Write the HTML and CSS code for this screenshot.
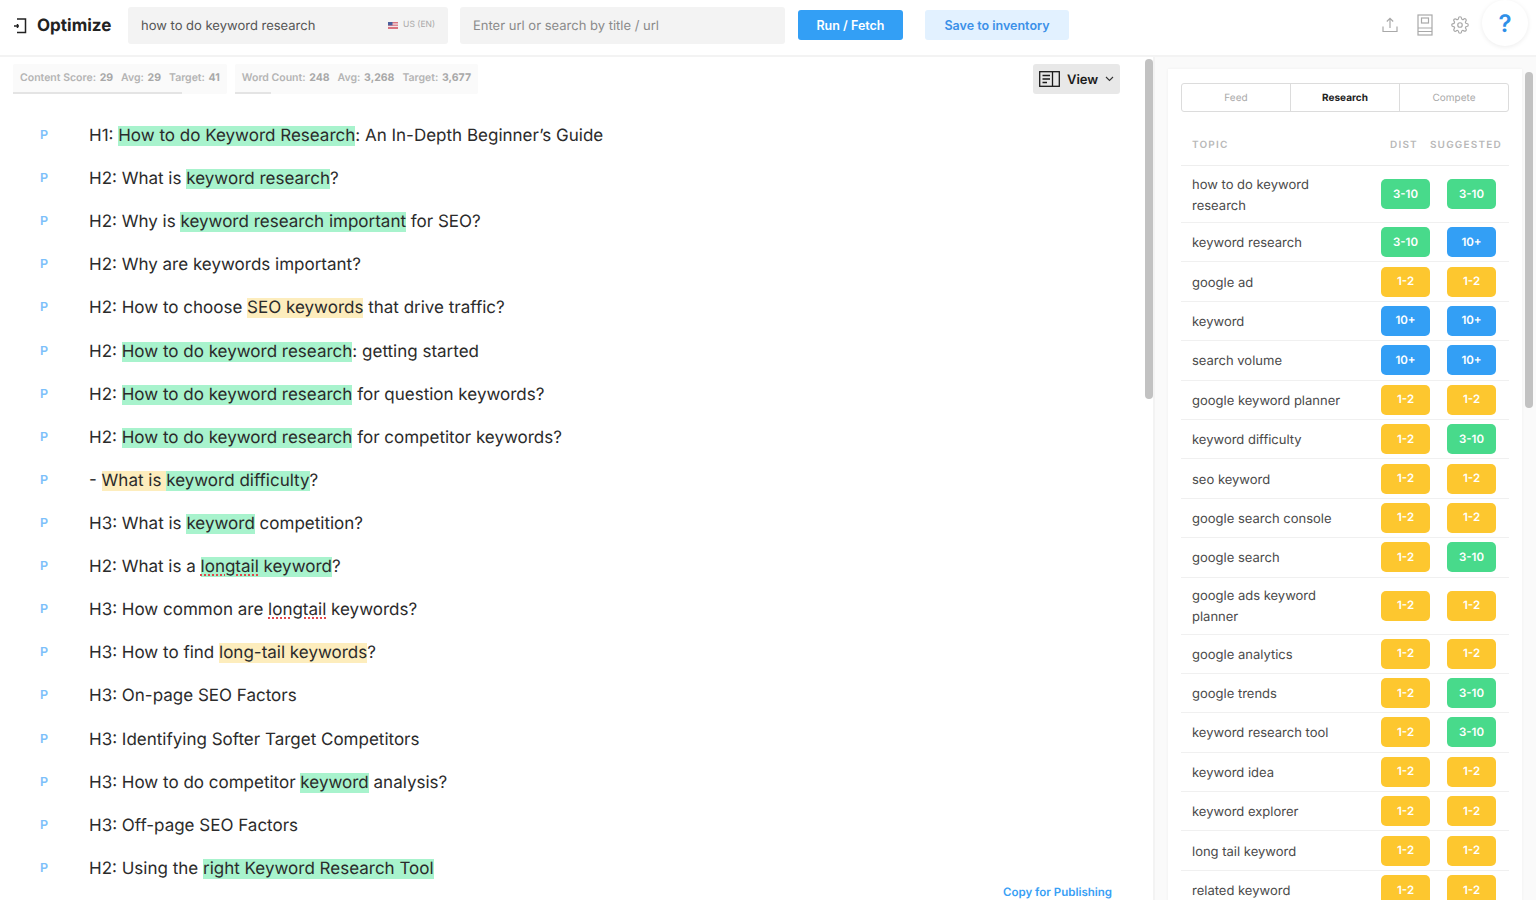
FILE: index.html
```html
<!DOCTYPE html>
<html lang="en">
<head>
  <meta charset="UTF-8" />
  <title>Optimize</title>
  <link rel="stylesheet" href="styles.css">
</head>
<body>
  <header class="topbar">
    <div class="brand">
      <svg class="brand-icon" width="14" height="16" viewBox="0 0 14 16" fill="none" stroke="#222" stroke-width="1.5">
        <path d="M4 1h8.500v13.500H4" />
        <path d="M1 8h5M4.500 6v4" />
      </svg>
      <span>Optimize</span>
    </div>
    <div class="field field-keyword">
      <span>how to do keyword research</span>
      <span class="locale">
        <svg width="10" height="7" viewBox="0 0 10 7"><rect width="10" height="7" fill="#d9737f" /><rect y="1.400" width="10" height="1.200" fill="#f3e6e8" /><rect y="3.800" width="10" height="1.200" fill="#f3e6e8" /><rect width="4.500" height="3.400" fill="#4a5f9c" /></svg>
        US (EN)
      </span>
    </div>
    <div class="field field-url">Enter url or search by title / url</div>
    <button class="btn btn-run">Run / Fetch</button>
    <button class="btn btn-save">Save to inventory</button>
    <div class="top-icons">
      <svg class="upload-icon" width="16" height="16" viewBox="0 0 16 16" fill="none" stroke="#a9a9a9" stroke-width="1.200">
        <path d="M8 11V1.500M4.800 4.500 8 1.300l3.200 3.200" />
        <path d="M1 9.500v5h14v-5" />
      </svg>
      <svg width="16" height="22" viewBox="0 0 16 22" fill="none" stroke="#a9a9a9" stroke-width="1.200">
        <rect x="1" y="1" width="14" height="20" />
        <rect x="4.500" y="4" width="7" height="5" />
        <path d="M1 14h14M1 17.500h14" />
      </svg>
      <svg width="18" height="18" viewBox="0 0 24 24" fill="none" stroke="#a9a9a9" stroke-width="1.600">
        <circle cx="12" cy="12" r="3" />
        <path d="M19.400 15a1.650 1.650 0 0 0 .33 1.820l.06.06a2 2 0 0 1 0 2.830 2 2 0 0 1-2.830 0l-.06-.06a1.650 1.650 0 0 0-1.820-.33 1.650 1.650 0 0 0-1 1.510V21a2 2 0 0 1-2 2 2 2 0 0 1-2-2v-.09A1.650 1.650 0 0 0 9 19.400a1.650 1.650 0 0 0-1.820.33l-.06.06a2 2 0 0 1-2.830 0 2 2 0 0 1 0-2.830l.06-.06a1.650 1.650 0 0 0 .33-1.820 1.650 1.650 0 0 0-1.510-1H3a2 2 0 0 1-2-2 2 2 0 0 1 2-2h.09A1.650 1.650 0 0 0 4.600 9a1.650 1.650 0 0 0-.33-1.820l-.06-.06a2 2 0 0 1 0-2.830 2 2 0 0 1 2.830 0l.06.06a1.650 1.650 0 0 0 1.820.33H9a1.650 1.650 0 0 0 1-1.510V3a2 2 0 0 1 2-2 2 2 0 0 1 2 2v.09a1.650 1.650 0 0 0 1 1.510 1.650 1.650 0 0 0 1.820-.33l.06-.06a2 2 0 0 1 2.830 0 2 2 0 0 1 0 2.830l-.06.06a1.650 1.650 0 0 0-.33 1.820V9a1.650 1.650 0 0 0 1.510 1H21a2 2 0 0 1 2 2 2 2 0 0 1-2 2h-.09a1.650 1.650 0 0 0-1.510 1z" />
      </svg>
    </div>
    <div class="help">?</div>
  </header>

  <main class="workspace">
    <section class="editor">
      <div class="editor-head">
        <div class="stat">
          <span>Content Score: <b>29</b></span><span>Avg: <b>29</b></span><span>Target: <b>41</b></span>
          <i class="stat-bar stat-bar-score"></i>
        </div>
        <div class="stat">
          <span>Word Count: <b>248</b></span><span>Avg: <b>3,268</b></span><span>Target: <b>3,677</b></span>
          <i class="stat-bar stat-bar-words"></i>
        </div>
        <div class="view-btn">
          <svg width="21" height="16" viewBox="0 0 21 16" fill="none" stroke="#1a1a1a" stroke-width="1.300">
            <rect x="0.700" y="0.700" width="19.600" height="14.600" />
            <path d="M13.500 1v14M3.500 4.500h7.500M3.500 8h7.500M3.500 11.500h4.500" />
          </svg>
          <span class="view-label">View</span>
          <svg width="9" height="6" viewBox="0 0 9 6" fill="none" stroke="#333" stroke-width="1.100"><path d="M1 1l3.500 3.500L8 1" /></svg>
        </div>
      </div>

      <div class="lines">
        <div class="line"><span class="tag">P</span><p>H1: <mark class="good">How to do Keyword Research</mark>: An In-Depth Beginner’s Guide</p></div>
        <div class="line"><span class="tag">P</span><p>H2: What is <mark class="good">keyword research</mark>?</p></div>
        <div class="line"><span class="tag">P</span><p>H2: Why is <mark class="good">keyword research important</mark> for SEO?</p></div>
        <div class="line"><span class="tag">P</span><p>H2: Why are keywords important?</p></div>
        <div class="line"><span class="tag">P</span><p>H2: How to choose <mark class="warn">SEO keywords</mark> that drive traffic?</p></div>
        <div class="line"><span class="tag">P</span><p>H2: <mark class="good">How to do keyword research</mark>: getting started</p></div>
        <div class="line"><span class="tag">P</span><p>H2: <mark class="good">How to do keyword research</mark> for question keywords?</p></div>
        <div class="line"><span class="tag">P</span><p>H2: <mark class="good">How to do keyword research</mark> for competitor keywords?</p></div>
        <div class="line"><span class="tag">P</span><p>- <mark class="warn">What is </mark><mark class="good">keyword difficulty</mark>?</p></div>
        <div class="line"><span class="tag">P</span><p>H3: What is <mark class="good">keyword</mark> competition?</p></div>
        <div class="line"><span class="tag">P</span><p>H2: What is a <mark class="good"><u>longtail</u> keyword</mark>?</p></div>
        <div class="line"><span class="tag">P</span><p>H3: How common are <u>longtail</u> keywords?</p></div>
        <div class="line"><span class="tag">P</span><p>H3: How to find <mark class="warn">long-tail keywords</mark>?</p></div>
        <div class="line"><span class="tag">P</span><p>H3: On-page SEO Factors</p></div>
        <div class="line"><span class="tag">P</span><p>H3: Identifying Softer Target Competitors</p></div>
        <div class="line"><span class="tag">P</span><p>H3: How to do competitor <mark class="good">keyword</mark> analysis?</p></div>
        <div class="line"><span class="tag">P</span><p>H3: Off-page SEO Factors</p></div>
        <div class="line"><span class="tag">P</span><p>H2: Using the <mark class="good">right Keyword Research Tool</mark></p></div>
      </div>
      <a class="copy-link">Copy for Publishing</a>
      <div class="scroll-thumb scroll-left"></div>
    </section>

    <aside class="side">
      <div class="card">
        <div class="tabs">
          <div class="tab">Feed</div>
          <div class="tab tab-active">Research</div>
          <div class="tab">Compete</div>
        </div>
        <div class="table-head">
          <span class="col-topic">Topic</span>
          <span class="col-dist">Dist</span>
          <span class="col-sugg">Suggested</span>
        </div>
        <div class="row"><span class="topic">how to do keyword research</span><span class="pill green">3-10</span><span class="pill green">3-10</span></div>
        <div class="row"><span class="topic">keyword research</span><span class="pill green">3-10</span><span class="pill blue">10+</span></div>
        <div class="row"><span class="topic">google ad</span><span class="pill yellow">1-2</span><span class="pill yellow">1-2</span></div>
        <div class="row"><span class="topic">keyword</span><span class="pill blue">10+</span><span class="pill blue">10+</span></div>
        <div class="row"><span class="topic">search volume</span><span class="pill blue">10+</span><span class="pill blue">10+</span></div>
        <div class="row"><span class="topic">google keyword planner</span><span class="pill yellow">1-2</span><span class="pill yellow">1-2</span></div>
        <div class="row"><span class="topic">keyword difficulty</span><span class="pill yellow">1-2</span><span class="pill green">3-10</span></div>
        <div class="row"><span class="topic">seo keyword</span><span class="pill yellow">1-2</span><span class="pill yellow">1-2</span></div>
        <div class="row"><span class="topic">google search console</span><span class="pill yellow">1-2</span><span class="pill yellow">1-2</span></div>
        <div class="row"><span class="topic">google search</span><span class="pill yellow">1-2</span><span class="pill green">3-10</span></div>
        <div class="row"><span class="topic">google ads keyword planner</span><span class="pill yellow">1-2</span><span class="pill yellow">1-2</span></div>
        <div class="row"><span class="topic">google analytics</span><span class="pill yellow">1-2</span><span class="pill yellow">1-2</span></div>
        <div class="row"><span class="topic">google trends</span><span class="pill yellow">1-2</span><span class="pill green">3-10</span></div>
        <div class="row"><span class="topic">keyword research tool</span><span class="pill yellow">1-2</span><span class="pill green">3-10</span></div>
        <div class="row"><span class="topic">keyword idea</span><span class="pill yellow">1-2</span><span class="pill yellow">1-2</span></div>
        <div class="row"><span class="topic">keyword explorer</span><span class="pill yellow">1-2</span><span class="pill yellow">1-2</span></div>
        <div class="row"><span class="topic">long tail keyword</span><span class="pill yellow">1-2</span><span class="pill yellow">1-2</span></div>
        <div class="row"><span class="topic">related keyword</span><span class="pill yellow">1-2</span><span class="pill yellow">1-2</span></div>
      </div>
      <div class="scroll-thumb scroll-right"></div>
    </aside>
  </main>
</body>
</html>
```

FILE: styles.css
```css
html, body {
  margin: 0;
  padding: 0;
  height: 100%;
  overflow: hidden;
  background-color: #ffffff;
  font-family: Inter, "Liberation Sans", sans-serif;
  color: #2b2b2b;
  text-rendering: geometricPrecision;
}

.topbar {
  display: flex;
  align-items: center;
  height: 55px;
  border-bottom: 2px solid #f3f3f3;
  box-sizing: content-box;
  position: relative;
}

.brand {
  display: flex;
  align-items: center;
  gap: 10px;
  width: 128px;
  padding-left: 13px;
  box-sizing: border-box;
  margin-top: -4px;
  font-size: 17px;
  font-weight: 700;
  color: #222222;
}

.field {
  display: flex;
  align-items: center;
  justify-content: space-between;
  height: 37px;
  margin-top: -4px;
  padding: 1px 13px 0;
  box-sizing: border-box;
  border-radius: 3px;
  background-color: #f3f3f3;
  font-size: 13px;
  color: #555555;
}

.field-keyword {
  width: 320px;
  margin-right: 12px;
}

.field-url {
  width: 325px;
  margin-right: 13px;
  color: #8a8a8a;
}

.locale {
  display: flex;
  align-items: center;
  gap: 5px;
  font-size: 8.500px;
  color: #a8a8a8;
  margin-top: -2px;
}

.btn {
  height: 30px;
  margin-top: -5px;
  padding: 0;
  border: none;
  border-radius: 3px;
  font-family: inherit;
  font-size: 12.500px;
  font-weight: 600;
  cursor: pointer;
}

.btn-run {
  width: 105px;
  margin-right: 22px;
  background-color: #339ff5;
  color: #ffffff;
}

.btn-save {
  width: 144px;
  background-color: #e2f1ff;
  color: #3b90e8;
}

.top-icons {
  display: flex;
  align-items: center;
  gap: 18px;
  margin-left: auto;
  margin-right: 67px;
  margin-top: -6px;
}

.upload-icon {
  margin-right: 1px;
}

.help {
  position: absolute;
  right: 8px;
  top: 0;
  width: 46px;
  height: 46px;
  border-radius: 50%;
  box-shadow: 0 1px 5px rgba(0,0,0,0.08);
  display: flex;
  align-items: center;
  justify-content: center;
  font-size: 24px;
  font-weight: 600;
  color: #2f8fe8;
}

.workspace {
  display: flex;
  height: 843px;
}

.editor {
  position: relative;
  width: 1155px;
  flex-shrink: 0;
  box-sizing: border-box;
  border-right: 2px solid #f3f3f3;
}

.editor-head {
  display: flex;
  align-items: flex-start;
  gap: 8px;
  padding: 7px 20px 0 13px;
  height: 58px;
  box-sizing: border-box;
}

.stat {
  position: relative;
  display: flex;
  gap: 8px;
  align-items: center;
  height: 30px;
  padding: 0 7px 3px;
  box-sizing: border-box;
  border-radius: 2px;
  background-color: #fafafa;
  font-size: 10.500px;
  font-weight: 600;
  color: #b4b4b4;
  white-space: nowrap;
}

.stat b {
  font-weight: 700;
  color: #a8a8a8;
  margin-left: 1px;
}

.stat-bar {
  position: absolute;
  left: 0;
  bottom: 0;
  height: 2px;
  background-color: #e4e4e4;
}

.stat-bar-score {
  width: 79%;
}

.stat-bar-words {
  width: 15%;
}

.view-btn {
  display: flex;
  align-items: center;
  gap: 7px;
  position: absolute;
  left: 1033px;
  top: 7px;
  width: 87px;
  height: 30px;
  padding-left: 6px;
  box-sizing: border-box;
  border-radius: 3px;
  background-color: #e8e8e8;
  font-size: 13px;
  font-weight: 600;
  color: #1a1a1a;
}

.view-label {
  padding-top: 1px;
}

.lines {
  display: flex;
  flex-direction: column;
  padding-left: 40px;
}

.line {
  display: flex;
  align-items: center;
  height: 43.120px;
  flex-shrink: 0;
}

.tag {
  width: 49px;
  margin-top: -2px;
  font-size: 12.500px;
  font-weight: 600;
  color: #7cc0fa;
}

.line p {
  margin: 0;
  font-size: 17px;
  line-height: 21px;
  color: #2b2b2b;
  white-space: nowrap;
}

mark {
  color: inherit;
}

.good {
  background-color: #a8f3cd;
}

.warn {
  background-color: #fdedbd;
}

u {
  text-decoration: underline dotted #e0484c 1.500px;
  text-underline-offset: 2px;
}

.copy-link {
  position: absolute;
  left: 1003px;
  top: 828px;
  font-size: 11.500px;
  font-weight: 600;
  color: #38a0f5;
}

.scroll-thumb {
  position: absolute;
  width: 8px;
  border-radius: 4px;
  background-color: #c2c2c2;
}

.scroll-left {
  left: 1145px;
  top: 2px;
  height: 340px;
}

.side {
  position: relative;
  flex: 1;
  background-color: #fafafa;
  padding: 12px 0 0 13px;
  overflow: hidden;
}

.scroll-right {
  left: 370px;
  top: 15px;
  height: 336px;
}

.card {
  width: 354px;
  padding: 14px 13px 0;
  box-sizing: border-box;
  background-color: #ffffff;
  box-shadow: 0 0 3px rgba(0,0,0,0.05);
}

.tabs {
  display: flex;
  height: 29px;
  box-sizing: border-box;
  border: 1px solid #dcdcdc;
  border-radius: 3px;
}

.tab {
  flex: 1;
  display: flex;
  align-items: center;
  justify-content: center;
  font-size: 10px;
  color: #a9a9a9;
}

.tab-active {
  border-left: 1px solid #dcdcdc;
  border-right: 1px solid #dcdcdc;
  font-weight: 700;
  color: #222222;
}

.table-head {
  display: flex;
  align-items: center;
  height: 41px;
  padding-top: 12px;
  padding-left: 11px;
  font-size: 10px;
  font-weight: 600;
  letter-spacing: 1.200px;
  text-transform: uppercase;
  color: #b8b8b8;
  border-bottom: 1px solid #eeeeee;
}

.col-topic {
  flex: 1;
}

.col-sugg {
  margin-left: 12px;
  margin-right: 7px;
}

.row {
  display: flex;
  align-items: center;
  gap: 17px;
  min-height: 38.400px;
  padding-left: 11px;
  padding-right: 13px;
  border-bottom: 1px solid #f0f0f0;
  font-size: 13px;
  line-height: 21px;
  color: #4a4a4a;
}

.topic {
  flex: 1;
  padding: 8.500px 15px 5.500px 0;
}

.pill {
  width: 49px;
  height: 30px;
  flex-shrink: 0;
  display: flex;
  align-items: center;
  justify-content: center;
  border-radius: 5px;
  font-size: 11.500px;
  font-weight: 600;
  color: #ffffff;
}

.green {
  background-color: #48da8b;
}

.blue {
  background-color: #339ff5;
}

.yellow {
  background-color: #fdc72f;
}
```
